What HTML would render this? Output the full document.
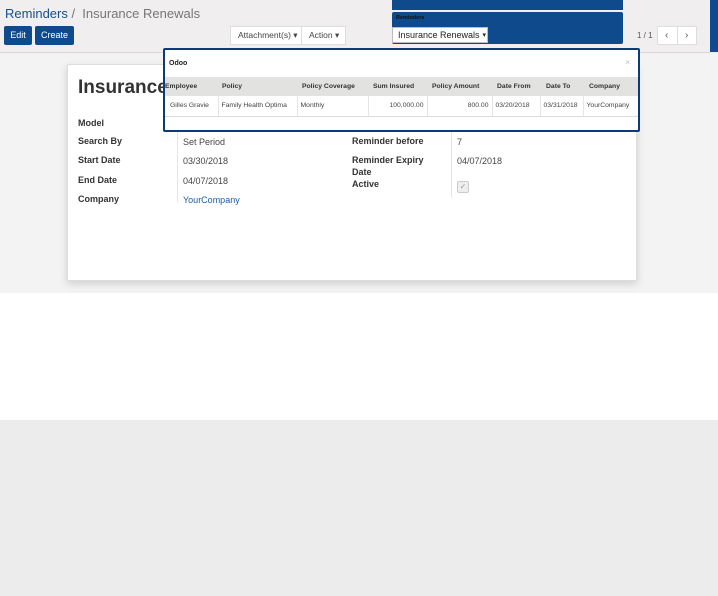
<!DOCTYPE html>
<html><head><style>
*{margin:0;padding:0;box-sizing:border-box}
body{width:718px;height:596px;position:relative;background:#ececec;font-family:"Liberation Sans",sans-serif;overflow:hidden}
.abs{position:absolute}
.cp{left:0;top:0;width:710px;height:53px;background:#f0eeee;border-bottom:1px solid #d8d8d8}
.content{left:0;top:53px;width:718px;height:240px;background:#f4f3f3}
.white{left:0;top:293px;width:718px;height:127px;background:#fff}
.btn{background:#0f4a8c;color:#fff;font-size:9px;border-radius:2px;text-align:center;line-height:19px;height:19px;top:26px}
.sheet{left:67px;top:64px;width:570px;height:217px;background:#fff;border:1px solid #ddd;box-shadow:0 3px 8px rgba(0,0,0,.15)}
.lbl{font-size:9px;font-weight:bold;color:#333}
.val{font-size:9px;color:#444}
.modal{left:163px;top:48px;width:477px;height:84px;background:#fff;border:2px solid #0e3a78;border-radius:2px}
table{border-collapse:collapse;position:absolute;left:0;top:27px;width:473px;font-size:6.8px}
th{background:#e2e2e0;height:19px;font-weight:bold;color:#333;text-align:left;padding-left:5px}
td{height:20px;color:#444;border-right:1px solid #e5e5e5;border-bottom:1px solid #ddd;padding:0 3px}
</style></head><body>
<div class="abs cp"></div>
<div class="abs" style="left:710px;top:0;width:8px;height:52px;background:#0f4a8c"></div>
<div class="abs content"></div>
<div class="abs white"></div>
<div class="abs" style="left:5px;top:6px;font-size:13px;color:#1a4e8c">Reminders <span style="color:#777">/&nbsp; Insurance Renewals</span></div>
<div class="abs btn" style="left:4px;width:28px">Edit</div>
<div class="abs btn" style="left:35px;width:39px">Create</div>
<div class="abs" style="left:230px;top:26px;width:116px;height:19px;background:#fff;border:1px solid #ddd;font-size:8.5px;color:#444;line-height:17px">
<span style="position:absolute;left:7px">Attachment(s) ▾</span><span style="position:absolute;left:70px;top:0;height:17px;border-left:1px solid #ddd;padding-left:7px">Action ▾</span></div>
<div class="abs" style="left:392px;top:0;width:231px;height:10px;background:#0f4a8c"></div>
<div class="abs" style="left:392px;top:12px;width:231px;height:32px;background:#0f4a8c;border-radius:2px"></div>
<div class="abs" style="left:396px;top:15px;font-size:5.5px;font-weight:bold;color:#111">Reminders</div>
<div class="abs" style="left:392px;top:27px;width:96px;height:16px;background:#fff;border:1px solid #bbb;font-size:9px;color:#222;line-height:15px;padding-left:5px">Insurance Renewals <span style="position:absolute;right:1px;top:0;font-size:7px">▾</span></div>
<div class="abs" style="left:637px;top:31px;font-size:8px;color:#555">1 / 1</div>
<div class="abs" style="left:657px;top:26px;width:40px;height:19px;background:#fff;border:1px solid #ddd;font-size:10px;color:#555;line-height:17px"><span style="position:absolute;left:7px">‹</span><span style="position:absolute;left:19px;top:0;height:17px;border-left:1px solid #ddd;padding-left:7px">›</span></div>
<div class="abs sheet">
<div class="abs" style="left:10px;top:12px;font-size:19px;font-weight:bold;color:#333">Insurance</div>
<div class="abs lbl" style="left:10px;top:53px">Model</div>
<div class="abs lbl" style="left:10px;top:71px">Search By</div>
<div class="abs lbl" style="left:10px;top:90px">Start Date</div>
<div class="abs lbl" style="left:10px;top:110px">End Date</div>
<div class="abs lbl" style="left:10px;top:129px">Company</div>
<div class="abs" style="left:109px;top:65px;width:1px;height:72px;background:#e5e5e5"></div>
<div class="abs val" style="left:115px;top:72px">Set Period</div>
<div class="abs val" style="left:115px;top:91px">03/30/2018</div>
<div class="abs val" style="left:115px;top:111px">04/07/2018</div>
<div class="abs val" style="left:115px;top:130px;color:#1a5ca8">YourCompany</div>
<div class="abs lbl" style="left:284px;top:71px">Reminder before</div>
<div class="abs lbl" style="left:284px;top:89px;line-height:12px">Reminder Expiry<br>Date</div>
<div class="abs lbl" style="left:284px;top:114px">Active</div>
<div class="abs" style="left:383px;top:65px;width:1px;height:68px;background:#e5e5e5"></div>
<div class="abs val" style="left:389px;top:72px">7</div>
<div class="abs val" style="left:389px;top:91px">04/07/2018</div>
<div class="abs" style="left:389px;top:116px;width:12px;height:12px;border:1px solid #ccc;background:#eee;border-radius:2px;font-size:8px;color:#999;line-height:10px;text-align:center">✓</div>
</div>
<div class="abs modal">
<div class="abs" style="left:4px;top:10px;font-size:7px;font-weight:bold;color:#222">Odoo</div>
<div class="abs" style="right:8px;top:8px;font-size:8px;color:#bbb">×</div>
<table>
<tr><th style="width:53px;padding-left:0">Employee</th><th style="width:79px;padding-left:4px">Policy</th><th style="width:71px">Policy Coverage</th><th style="width:59px">Sum Insured</th><th style="width:65px">Policy Amount</th><th style="width:48px">Date From</th><th style="width:43px;padding-left:6px">Date To</th><th style="padding-left:6px">Company</th></tr>
<tr><td style="padding-left:5px">Gilles Gravie</td><td>Family Health Optima</td><td>Monthly</td><td style="text-align:right">100,000.00</td><td style="text-align:right">800.00</td><td>03/20/2018</td><td>03/31/2018</td><td style="border-right:0">YourCompany</td></tr>
</table>
</div>
</body></html>
